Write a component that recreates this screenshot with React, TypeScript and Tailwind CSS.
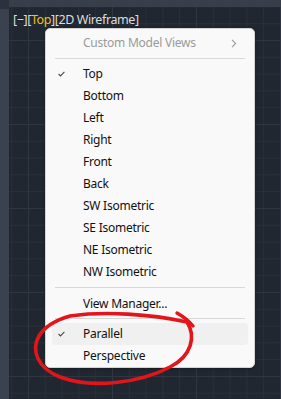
import React from "react";

const Check = () => (
  <svg width="7" height="6" viewBox="0 0 7 6" className="block">
    <path d="M0.6 3 L2.5 4.9 L6.4 0.9" fill="none" stroke="#4a4a4a" strokeWidth="1.1" />
  </svg>
);

const Item = ({ label, checked, active }: { label: string; checked?: boolean; active?: boolean }) => (
  <div className={`mx-[6px] flex h-[22px] items-center rounded-[4px] ${active ? "bg-[#f0f0f0]" : ""}`}>
    <div className="flex w-[31px] justify-start pl-[6px]">{checked ? <Check /> : null}</div>
    <span className="text-[12px] leading-none tracking-[-0.25px] text-[#111]">{label}</span>
  </div>
);

export default function App() {
  return (
    <div className="flex h-[399px] w-[281px] overflow-hidden bg-[#2e3440] font-['Noto_Sans',sans-serif]">
      <div className="flex w-[9px] flex-col">
        <div className="h-[9px] bg-[#2c323d]" />
        <div className="flex-1 bg-[#3b424f]" />
      </div>
      <div className="flex flex-1 flex-col">
        <div className="h-[7px] bg-[#383f4b]" />
        <div className="relative flex-1 rounded-tl-[3px] bg-[#212731] [background-image:linear-gradient(to_right,#2f3642_1px,transparent_1px),linear-gradient(to_bottom,#2f3642_1px,transparent_1px),linear-gradient(to_right,#293039_1px,transparent_1px),linear-gradient(to_bottom,#293039_1px,transparent_1px)] [background-size:84px_100%,100%_84px,16.8px_100%,100%_16.8px] [background-position:19px_0,0_33px,2.2px_0,0_16.2px]">
          <div className="pl-[4px] pt-[5px] text-[12.5px] leading-[16px] tracking-[-0.4px] text-[#dcdcdc] font-['Noto_Sans',sans-serif]">
            [−][<span className="text-[#e8c41c]">Top</span>][2D Wireframe]
          </div>

          <div className="absolute left-[36px] top-[21px] w-[210px] rounded-[5px] border border-[#d4d4d4] bg-[#f9f9f9] pb-0 pt-[3px] shadow-[0_1px_3px_rgba(0,0,0,0.35)]">
            <div className="mx-[6px] flex h-[22px] items-center">
              <div className="w-[31px]" />
              <span className="flex-1 text-[12px] leading-none tracking-[-0.25px] text-[#9b9b9b]">Custom Model Views</span>
              <svg width="6" height="9" viewBox="0 0 6 9" className="mr-[11px]">
                <path d="M1 0.8 L4.6 4.5 L1 8.2" fill="none" stroke="#9b9b9b" strokeWidth="1.1" />
              </svg>
            </div>
            <div className="mx-[9px] my-[4px] h-px bg-[#d8d8d8]" />
            <Item label="Top" checked />
            <Item label="Bottom" />
            <Item label="Left" />
            <Item label="Right" />
            <Item label="Front" />
            <Item label="Back" />
            <Item label="SW Isometric" />
            <Item label="SE Isometric" />
            <Item label="NE Isometric" />
            <Item label="NW Isometric" />
            <div className="mx-[9px] mb-[5px] mt-[4px] h-px bg-[#d8d8d8]" />
            <Item label="View Manager..." />
            <div className="mx-[9px] mb-[4px] mt-[3px] h-px bg-[#d8d8d8]" />
            <Item label="Parallel" checked active />
            <Item label="Perspective" />
          </div>

          <svg className="pointer-events-none absolute left-[-9px] top-[-7px]" width="281" height="399" viewBox="0 0 281 399">
            <path
              d="M70 316 C 105 311 150 314 187 322 C 196 336 192 356 170 367 C 140 383 92 389 60 377 C 37 368 31 350 39 336 C 45 326 56 320 70 316 Z"
              fill="none"
              stroke="#e3151b"
              strokeWidth="3.6"
              strokeLinejoin="round"
            />
            <path d="M177 313 C 184 317 189 321 193 326" fill="none" stroke="#e3151b" strokeWidth="3.4" strokeLinecap="round" />
          </svg>
        </div>
      </div>
    </div>
  );
}
